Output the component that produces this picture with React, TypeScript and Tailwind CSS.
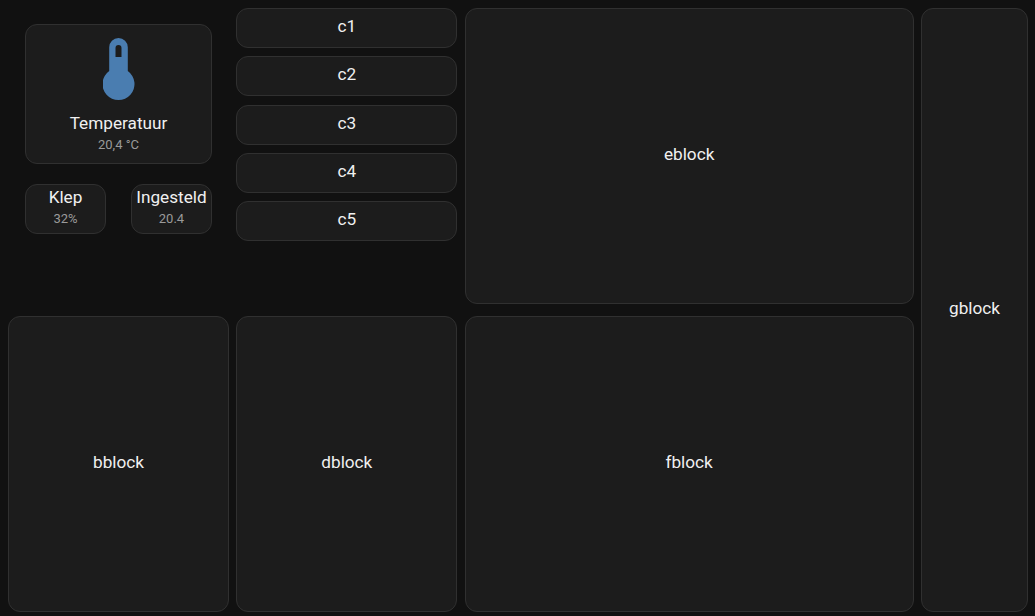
const card = "rounded-xl border border-[#303030] bg-[#1c1c1c] flex flex-col items-center justify-center";
const label = "text-[17.2px] leading-[22px] text-[#f0f0f0]";
const sub = "text-[13px] leading-[18px] text-[#9a9a9a]";

const cBlocks = ["c1", "c2", "c3", "c4", "c5"];

function Thermometer() {
  return (
    <svg width="32" height="64" viewBox="0.5 0 32 64" className="block">
      <path
        fillRule="evenodd"
        fill="#4a7db0"
        d="M6.7 9.3a9.3 9.3 0 0 1 18.6 0V33A16 16 0 1 1 6.7 33ZM13 10a3 3 0 0 1 6 0v9h-6Z"
      />
    </svg>
  );
}

export default function App() {
  return (
    <div className="w-[1035px] h-[616px] bg-[#111111] overflow-hidden font-['Roboto',sans-serif] grid grid-cols-[221px_221px_449px_107px] grid-rows-[295.5px_296px] gap-x-[7.33px] gap-y-[12.5px] pl-[8px] pt-[8px]">
      <div className="px-[17px] pt-[16px] flex flex-col">
        <div className={`${card} h-[140px] justify-start pt-[13px]`}>
          <Thermometer />
          <span className={`${label} mt-[10px]`}>Temperatuur</span>
          <span className={`${sub} mt-[2px]`}>20,4 °C</span>
        </div>
        <div className="flex justify-between mt-[20px]">
          <div className={`${card} w-[81px] h-[50px] pb-[4px]`}>
            <span className={label}>Klep</span>
            <span className={`${sub} mt-[2px]`}>32%</span>
          </div>
          <div className={`${card} w-[81px] h-[50px] pb-[4px]`}>
            <span className={label}>Ingesteld</span>
            <span className={`${sub} mt-[2px]`}>20.4</span>
          </div>
        </div>
      </div>
      <div className="flex flex-col gap-[8.25px]">
        {cBlocks.map((name) => (
          <div key={name} className={`${card} h-[40px] pb-[4px]`}>
            <span className={label}>{name}</span>
          </div>
        ))}
      </div>
      <div className={`${card} pb-[4px]`}>
        <span className={label}>eblock</span>
      </div>
      <div className={`${card} row-span-2 pb-[4px]`}>
        <span className={label}>gblock</span>
      </div>
      <div className={`${card} pb-[4px]`}>
        <span className={label}>bblock</span>
      </div>
      <div className={`${card} pb-[4px]`}>
        <span className={label}>dblock</span>
      </div>
      <div className={`${card} pb-[4px]`}>
        <span className={label}>fblock</span>
      </div>
    </div>
  );
}
